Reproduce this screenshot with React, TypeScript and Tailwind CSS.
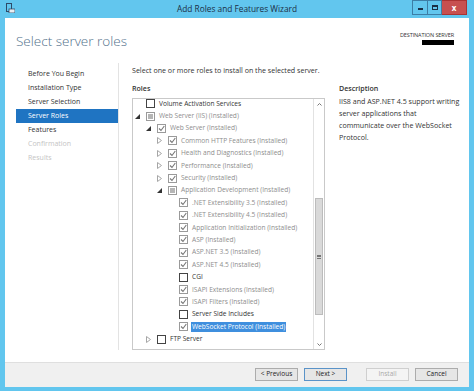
import React from 'react';

type Row = {
    label: string;
    level: number;
    arrow?: 'open' | 'closed';
    check: 'on' | 'off' | 'mixed';
    installed?: boolean;
    selected?: boolean;
};

const rows: Row[] = [
    { label: 'Volume Activation Services', level: 0, check: 'off' },
    { label: 'Web Server (IIS) (Installed)', level: 0, arrow: 'open', check: 'mixed', installed: true },
    { label: 'Web Server (Installed)', level: 1, arrow: 'open', check: 'on', installed: true },
    { label: 'Common HTTP Features (Installed)', level: 2, arrow: 'closed', check: 'on', installed: true },
    { label: 'Health and Diagnostics (Installed)', level: 2, arrow: 'closed', check: 'on', installed: true },
    { label: 'Performance (Installed)', level: 2, arrow: 'closed', check: 'on', installed: true },
    { label: 'Security (Installed)', level: 2, arrow: 'closed', check: 'on', installed: true },
    { label: 'Application Development (Installed)', level: 2, arrow: 'open', check: 'mixed', installed: true },
    { label: '.NET Extensibility 3.5 (Installed)', level: 3, check: 'on', installed: true },
    { label: '.NET Extensibility 4.5 (Installed)', level: 3, check: 'on', installed: true },
    { label: 'Application Initialization (Installed)', level: 3, check: 'on', installed: true },
    { label: 'ASP (Installed)', level: 3, check: 'on', installed: true },
    { label: 'ASP.NET 3.5 (Installed)', level: 3, check: 'on', installed: true },
    { label: 'ASP.NET 4.5 (Installed)', level: 3, check: 'on', installed: true },
    { label: 'CGI', level: 3, check: 'off' },
    { label: 'ISAPI Extensions (Installed)', level: 3, check: 'on', installed: true },
    { label: 'ISAPI Filters (Installed)', level: 3, check: 'on', installed: true },
    { label: 'Server Side Includes', level: 3, check: 'off' },
    { label: 'WebSocket Protocol (Installed)', level: 3, check: 'on', installed: true, selected: true },
    { label: 'FTP Server', level: 1, arrow: 'closed', check: 'off' },
];

const steps = [
    { label: 'Before You Begin' },
    { label: 'Installation Type' },
    { label: 'Server Selection' },
    { label: 'Server Roles', active: true },
    { label: 'Features' },
    { label: 'Confirmation', disabled: true },
    { label: 'Results', disabled: true },
];

const Arrow = ({ kind }: { kind?: 'open' | 'closed' }) => {
    if (!kind) return <span className="w-[11px] shrink-0" />;
    return (
        <span className="w-[11px] shrink-0 flex items-center">
            {kind === 'open' ? (
                <svg width="5" height="5" viewBox="0 0 5 5"><path d="M5 0 L5 5 L0 5 Z" fill="#333" /></svg>
            ) : (
                <svg width="5" height="7" viewBox="0 0 5 7"><path d="M0.5 0.5 L4.5 3.5 L0.5 6.5 Z" fill="none" stroke="#a6a6a6" strokeWidth="1" /></svg>
            )}
        </span>
    );
};

const Check = ({ state, installed }: { state: Row['check']; installed?: boolean }) => (
    <span className={`w-[9px] h-[9px] shrink-0 border flex items-center justify-center bg-white ${installed ? 'border-[#9a9a9a]' : 'border-[#444]'}`}>
        {state === 'on' && (
            <svg width="7" height="7" viewBox="0 0 7 7"><path d="M1 3.5 L3 5.5 L6.3 1" fill="none" stroke="#777" strokeWidth="1.1" /></svg>
        )}
        {state === 'mixed' && <span className="w-[5px] h-[5px] bg-[#b5b5b5]" />}
    </span>
);

const Button = ({ label, primary, disabled }: { label: string; primary?: boolean; disabled?: boolean }) => (
    <div className={`w-[43px] h-[13px] flex items-center justify-center text-[6.5px] leading-none border ${primary ? 'border-[#5a93c8] bg-[#e6e6e6]' : disabled ? 'border-[#cfcfcf] bg-[#f4f4f4]' : 'border-[#acacac] bg-[#e6e6e6]'} ${disabled ? 'text-[#a8a8a8]' : 'text-[#222]'}`}>
        {label}
    </div>
);

export default function App() {
    return (
        <div className="w-[474px] h-[391px] bg-[#62c6ee] flex flex-col font-['Open_Sans',sans-serif] overflow-hidden">
            {/* title bar */}
            <div className="h-[18px] relative flex items-center justify-center shrink-0">
                <svg className="absolute left-[6px] top-[3px]" width="9" height="10" viewBox="0 0 9 10">
                    <rect x="0.5" y="0.5" width="5" height="8" fill="none" stroke="#2d4a68" strokeWidth="1" />
                    <rect x="3" y="6" width="6" height="4" fill="#e8eef3" stroke="#2d4a68" strokeWidth="0.8" />
                </svg>
                <span className="text-[8.3px] text-[#1b2f45]">Add Roles and Features Wizard</span>
                <div className="absolute right-[7px] top-0 flex h-[15px]">
                    <div className="w-[15px] h-full border border-[#3d7ea6] border-r-0 bg-[#62c6ee] flex items-center justify-center">
                        <span className="w-[5px] h-[2px] bg-[#1b2f45] mt-[3px]" />
                    </div>
                    <div className="w-[15px] h-full border border-[#3d7ea6] bg-[#62c6ee] flex items-center justify-center">
                        <span className="w-[6px] h-[5px] border-[1.5px] border-[#1b2f45] border-t-2" />
                    </div>
                    <div className="w-[25px] h-full bg-[#c75050] border border-l-0 border-[#a33] flex items-center justify-center text-white text-[8px] font-bold leading-none">
                        x
                    </div>
                </div>
            </div>

            {/* client area */}
            <div className="flex-1 mx-[5px] mb-[4px] bg-white flex flex-col">
                <div className="flex-1 flex flex-col">
                    <div className="flex justify-between h-[45px] pt-[13px] pl-[11px] pr-[15px]">
                        <div className="text-[13.5px] font-light text-[#52718b] leading-[20px]">Select server roles</div>
                        <div className="flex flex-col items-end pt-[1px]">
                            <span className="text-[5.5px] text-[#333] leading-[7px] tracking-[-0.1px]">DESTINATION SERVER</span>
                            <span className="w-[32px] h-[5px] bg-black mt-[1px]" />
                        </div>
                    </div>

                    <div className="flex-1 flex pb-[12px]">
                        {/* nav */}
                        <div className="w-[114px] border-r border-[#e3e3e3] pt-[4px] pl-[11px]">
                            {steps.map(s => (
                                <div
                                    key={s.label}
                                    className={`h-[14px] flex items-center pl-[12px] text-[7px] ${s.active ? 'bg-[#1f74c2] text-white' : s.disabled ? 'text-[#c4c4c4]' : 'text-[#333]'}`}
                                >
                                    {s.label}
                                </div>
                            ))}
                        </div>

                        {/* main */}
                        <div className="flex-1 pl-[13px] pr-[8px] flex flex-col">
                            <div className="text-[7.1px] text-[#333] leading-[12px] pt-[1px]">Select one or more roles to install on the selected server.</div>
                            <div className="flex-1 flex gap-[14px] mt-[6px]">
                                <div className="w-[193px] flex flex-col">
                                    <div className="text-[7.1px] font-semibold text-[#333] leading-[12px]">Roles</div>
                                    <div className="flex-1 mt-[4px] border border-[#c9c9c9] flex overflow-hidden">
                                        <div className="flex-1 overflow-hidden">
                                            <div className="-mt-[1.5px] pl-[2px]">
                                                {rows.map(r => (
                                                    <div key={r.label} className="h-[12.4px] flex items-center" style={{ paddingLeft: r.level * 11 }}>
                                                        <Arrow kind={r.arrow} />
                                                        <Check state={r.check} installed={r.installed} />
                                                        <span
                                                            className={`ml-[3px] text-[6.6px] whitespace-nowrap leading-[10px] px-[1px] ${r.selected ? 'bg-[#3f8fde] text-white' : r.installed ? 'text-[#8e8e8e]' : 'text-[#333]'}`}
                                                        >
                                                            {r.label}
                                                        </span>
                                                    </div>
                                                ))}
                                            </div>
                                        </div>
                                        {/* scrollbar */}
                                        <div className="w-[11px] border-l border-[#e2e2e2] flex flex-col bg-white">
                                            <div className="h-[10px] flex items-center justify-center">
                                                <svg width="5" height="3" viewBox="0 0 5 3"><path d="M0.5 2.5 L2.5 0.5 L4.5 2.5" fill="none" stroke="#777" /></svg>
                                            </div>
                                            <div className="h-[89px]" />
                                            <div className="h-[117px] mx-[1px] bg-[#d9d9d9] border border-[#bcbcbc] flex items-center justify-center">
                                                <span className="w-[4px] h-[4px] border-y border-[#777] flex items-center"><span className="w-full h-px bg-[#777]" /></span>
                                            </div>
                                            <div className="flex-1" />
                                            <div className="h-[10px] flex items-center justify-center">
                                                <svg width="5" height="3" viewBox="0 0 5 3"><path d="M0.5 0.5 L2.5 2.5 L4.5 0.5" fill="none" stroke="#777" /></svg>
                                            </div>
                                        </div>
                                    </div>
                                </div>
                                <div className="flex-1">
                                    <div className="text-[7.1px] font-semibold text-[#333] leading-[12px]">Description</div>
                                    <div className="text-[7.1px] text-[#333] leading-[12px] mt-[1px]">
                                        IIS8 and ASP.NET 4.5 support writing server applications that communicate over the WebSocket Protocol.
                                    </div>
                                </div>
                            </div>
                        </div>
                    </div>
                </div>

                {/* footer */}
                <div className="h-[25px] shrink-0 bg-[#f0f0f0] border-t border-[#dfdfdf] flex items-start justify-end pt-[5px] pr-[11px]">
                    <Button label="< Previous" />
                    <div className="w-[6px]" />
                    <Button label="Next >" primary />
                    <div className="w-[19px]" />
                    <Button label="Install" disabled />
                    <div className="w-[6px]" />
                    <Button label="Cancel" />
                </div>
            </div>
        </div>
    );
}
